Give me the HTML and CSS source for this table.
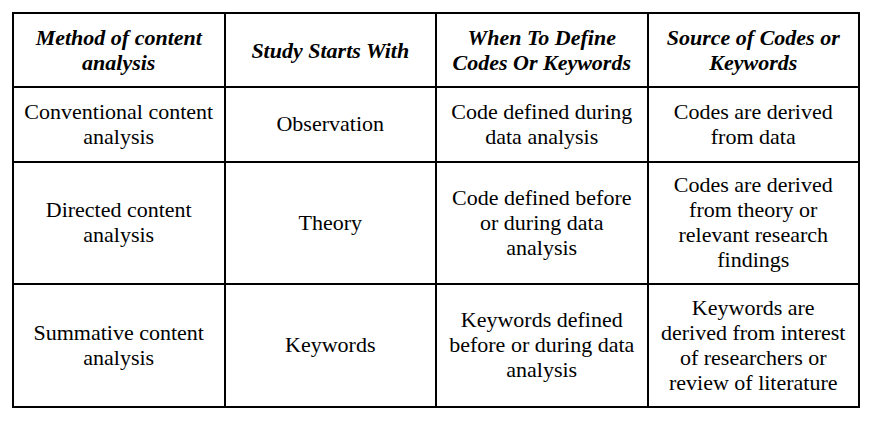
FILE: index.html
```html
<!DOCTYPE html>
<html>
<head>
<meta charset="utf-8">
<link rel="stylesheet" href="styles.css">
</head>
<body>
<table class="grid">
  <colgroup>
    <col class="c"><col class="c"><col class="c"><col class="c">
  </colgroup>
  <tr class="head">
    <th>Method of content analysis</th>
    <th>Study Starts With</th>
    <th>When To Define Codes Or Keywords</th>
    <th>Source of Codes or Keywords</th>
  </tr>
  <tr class="r1">
    <td>Conventional content analysis</td>
    <td>Observation</td>
    <td>Code defined during data analysis</td>
    <td>Codes are derived from data</td>
  </tr>
  <tr class="r2">
    <td>Directed content analysis</td>
    <td>Theory</td>
    <td>Code defined before or during data analysis</td>
    <td>Codes are derived from theory or relevant research findings</td>
  </tr>
  <tr class="r3">
    <td>Summative content analysis</td>
    <td>Keywords</td>
    <td>Keywords defined before or during data analysis</td>
    <td>Keywords are derived from interest of researchers or review of literature</td>
  </tr>
</table>
</body>
</html>
```
FILE: styles.css
```css
html, body {
  margin: 0;
  padding: 0;
  background: #fff;
}
body {
  padding: 12px 0 0 12px;
  font-family: "Liberation Serif", "Times New Roman", serif;
  color: #000;
}
.grid {
  border-collapse: collapse;
  table-layout: fixed;
  width: 846px;
}
.c { width: 211.5px; }
.grid th, .grid td {
  border: 2px solid #000;
  text-align: center;
  vertical-align: middle;
  padding: 0 8px 2px 8px;
  font-size: 22px;
  line-height: 25px;
}
.grid th {
  font-style: italic;
  font-weight: bold;
  padding-bottom: 0;
}
.head { height: 74px; }
.r1 { height: 75px; }
.r2 { height: 122px; }
.r3 { height: 123px; }
```
